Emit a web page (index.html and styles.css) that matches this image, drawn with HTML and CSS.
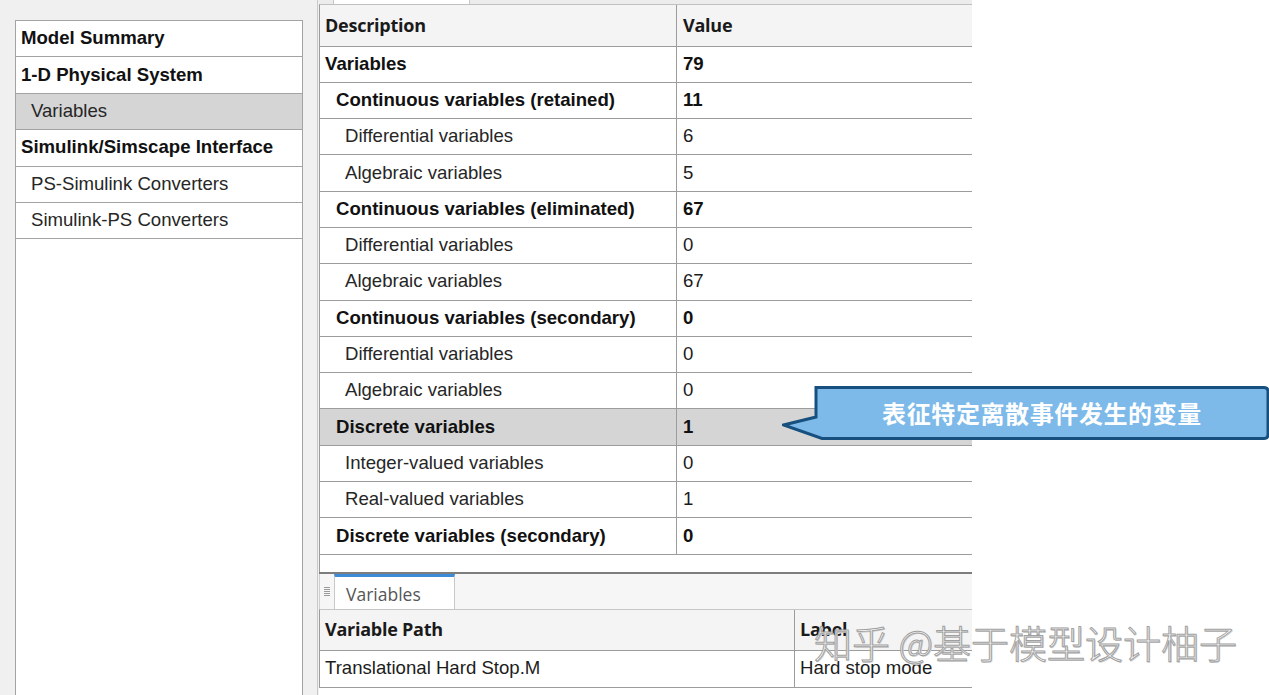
FILE: index.html
```html
<!DOCTYPE html>
<html lang="en">
<head>
<meta charset="utf-8">
<title>Statistics Viewer</title>
<link rel="stylesheet" href="styles.css">
</head>
<body>
<div class="app">
  <aside class="sidebar">
    <ul class="tree">
      <li class="node bold">Model Summary</li>
      <li class="node bold">1-D Physical System</li>
      <li class="node child selected">Variables</li>
      <li class="node bold">Simulink/Simscape Interface</li>
      <li class="node child">PS-Simulink Converters</li>
      <li class="node child">Simulink-PS Converters</li>
    </ul>
  </aside>
  <main class="content">
    <div class="toptabs"><div class="toptab"></div></div>
    <div class="summary">
      <div class="row head">
        <div class="desc">Description</div>
        <div class="val">Value</div>
      </div>
      <div class="row b"><div class="desc l0">Variables</div><div class="val">79</div></div>
      <div class="row b"><div class="desc l1">Continuous variables (retained)</div><div class="val">11</div></div>
      <div class="row"><div class="desc l2">Differential variables</div><div class="val">6</div></div>
      <div class="row"><div class="desc l2">Algebraic variables</div><div class="val">5</div></div>
      <div class="row b"><div class="desc l1">Continuous variables (eliminated)</div><div class="val">67</div></div>
      <div class="row"><div class="desc l2">Differential variables</div><div class="val">0</div></div>
      <div class="row"><div class="desc l2">Algebraic variables</div><div class="val">67</div></div>
      <div class="row b"><div class="desc l1">Continuous variables (secondary)</div><div class="val">0</div></div>
      <div class="row"><div class="desc l2">Differential variables</div><div class="val">0</div></div>
      <div class="row"><div class="desc l2">Algebraic variables</div><div class="val">0</div></div>
      <div class="row b sel"><div class="desc l1">Discrete variables</div><div class="val">1</div></div>
      <div class="row"><div class="desc l2">Integer-valued variables</div><div class="val">0</div></div>
      <div class="row"><div class="desc l2">Real-valued variables</div><div class="val">1</div></div>
      <div class="row b"><div class="desc l1">Discrete variables (secondary)</div><div class="val">0</div></div>
      <div class="summary-fill"></div>
    </div>
    <div class="lower">
      <div class="tabbar">
        <span class="grip"></span>
        <div class="tab active">Variables</div>
      </div>
      <div class="vtable">
        <div class="vrow vhead">
          <div class="vpath">Variable Path</div>
          <div class="vlabel">Label</div>
        </div>
        <div class="vrow">
          <div class="vpath">Translational Hard Stop.M</div>
          <div class="vlabel">Hard stop mode</div>
        </div>
      </div>
    </div>
  </main>
</div>

<div class="callout">
  <svg class="callout-shape" width="490" height="56" viewBox="0 0 490 56">
    <path d="M34 1.5 H482 Q486 1.5 486 5.5 V48.5 Q486 52.5 482 52.5 H40 L1.5 39 L34 31 Z" fill="#7db9e9" stroke="#17507f" stroke-width="3" stroke-linejoin="miter"/>
  </svg>
  <span class="callout-text">表征特定离散事件发生的变量</span>
</div>

<div class="watermark">知乎 @基于模型设计柚子</div>
</body>
</html>
```

FILE: styles.css
```css
* { box-sizing: border-box; }

html, body {
  margin: 0;
  padding: 0;
  background: #ffffff;
  width: 1269px;
  height: 695px;
  overflow: hidden;
}

body {
  font-family: "Liberation Sans", Arial, sans-serif;
  font-size: 18.6px;
  color: #1c1c1c;
  position: relative;
}

.app {
  display: flex;
  height: 695px;
}

/* ---------- left tree ---------- */
.sidebar {
  width: 318px;
  flex: 0 0 318px;
  background: #f0f0f0;
  border-right: 1px solid #c9c9c9;
  padding: 20px 0 0 15px;
}

.tree {
  list-style: none;
  margin: 0;
  padding: 0;
  width: 288px;
  height: 690px;
  background: #ffffff;
  border: 1px solid #a3a3a3;
}

.node {
  height: 36.4px;
  display: flex;
  align-items: center;
  border-bottom: 1px solid #a3a3a3;
  padding-left: 5px;
  padding-bottom: 1px;
  color: #262626;
}

.node.bold {
  font-weight: bold;
  color: #111;
}

.node.child {
  padding-left: 15px;
}

.node.selected {
  background: #d5d5d5;
}

/* ---------- right content ---------- */
.content {
  width: 654px;
  flex: 0 0 654px;
  background: #f0f0f0;
  padding-left: 1px;
  display: flex;
  flex-direction: column;
}

.toptabs {
  height: 4px;
  display: flex;
  background: #ececec;
}

.toptab {
  margin-left: 14px;
  width: 137px;
  background: #ffffff;
  border-left: 1px solid #c8c8c8;
  border-right: 1px solid #c8c8c8;
}

.summary {
  background: #ffffff;
  border-left: 1px solid #9c9c9c;
  border-top: 1px solid #c0c0c0;
}

.row {
  display: flex;
  height: 36.3px;
  border-bottom: 1px solid #9c9c9c;
  align-items: stretch;
}

.row > div {
  padding-bottom: 1px;
}

.row.head {
  height: 41.5px;
  background: #f4f4f4;
  font-family: "Open Sans", "Noto Sans", sans-serif;
  font-weight: 700;
  font-size: 18px;
  color: #1a1a1a;
  letter-spacing: -0.25px;
}

.row.b {
  font-weight: bold;
  color: #111;
}

.row.sel {
  background: #d5d5d5;
}

.desc {
  width: 357px;
  flex: 0 0 357px;
  border-right: 1px solid #9c9c9c;
  display: flex;
  align-items: center;
  padding-left: 5px;
}

.desc.l1 { padding-left: 16px; }
.desc.l2 { padding-left: 25px; color: #262626; }

.val {
  display: flex;
  align-items: center;
  padding-left: 6px;
}

.summary-fill {
  height: 17px;
}

/* ---------- lower panel ---------- */
.lower {
  border-top: 2px solid #7d7d7d;
  background: #ffffff;
  flex: 1;
}

.tabbar {
  height: 35px;
  display: flex;
  align-items: stretch;
  background: #f6f6f6;
  border-left: 1px solid #d0d0d0;
}

.grip {
  width: 14px;
  display: flex;
  align-items: center;
  justify-content: center;
}

.grip::before {
  content: "";
  width: 6px;
  height: 9px;
  background: repeating-linear-gradient(to bottom, #9a9a9a 0 1px, transparent 1px 2px);
}

.tab {
  width: 121px;
  background: #ffffff;
  border-top: 3px solid #3d8ad6;
  border-left: 1px solid #c9c9c9;
  border-right: 1px solid #c9c9c9;
  display: flex;
  align-items: center;
  padding-left: 11px;
  padding-top: 2px;
  font-family: "Open Sans", "Noto Sans", sans-serif;
  font-size: 17.5px;
  color: #565656;
}

.vtable {
  border-left: 1px solid #9c9c9c;
  border-top: 1px solid #c6c6c6;
}

.vrow {
  display: flex;
  height: 37px;
  border-bottom: 1px solid #9c9c9c;
}

.vrow.vhead {
  height: 41px;
  background: #f4f4f4;
  font-family: "Open Sans", "Noto Sans", sans-serif;
  font-weight: 700;
  font-size: 18px;
  color: #1a1a1a;
  letter-spacing: -0.25px;
}

.vpath {
  width: 475px;
  flex: 0 0 475px;
  border-right: 1px solid #9c9c9c;
  display: flex;
  align-items: center;
  padding-left: 5px;
  padding-bottom: 1px;
}

.vlabel {
  display: flex;
  align-items: center;
  padding-left: 5px;
  padding-bottom: 1px;
}

/* ---------- overlays ---------- */
.callout {
  position: absolute;
  left: 782px;
  top: 386px;
  width: 490px;
  height: 56px;
}

.callout-shape {
  position: absolute;
  left: 0;
  top: 0;
}

.callout-text {
  position: absolute;
  left: 34px;
  right: 4px;
  top: 0;
  height: 52px;
  display: flex;
  align-items: center;
  justify-content: center;
  color: #ffffff;
  font-family: "Noto Sans CJK SC", sans-serif;
  font-weight: 700;
  font-size: 24px;
  letter-spacing: 0.6px;
}

.watermark {
  position: absolute;
  left: 814px;
  top: 614px;
  font-family: "Noto Sans CJK SC", sans-serif;
  font-size: 38px;
  font-weight: 300;
  color: rgba(255, 255, 255, 0.85);
  -webkit-text-stroke: 1px #a0a0a0;
  text-shadow: 1px 1px 0 #d0d0d0;
  white-space: nowrap;
}
```
